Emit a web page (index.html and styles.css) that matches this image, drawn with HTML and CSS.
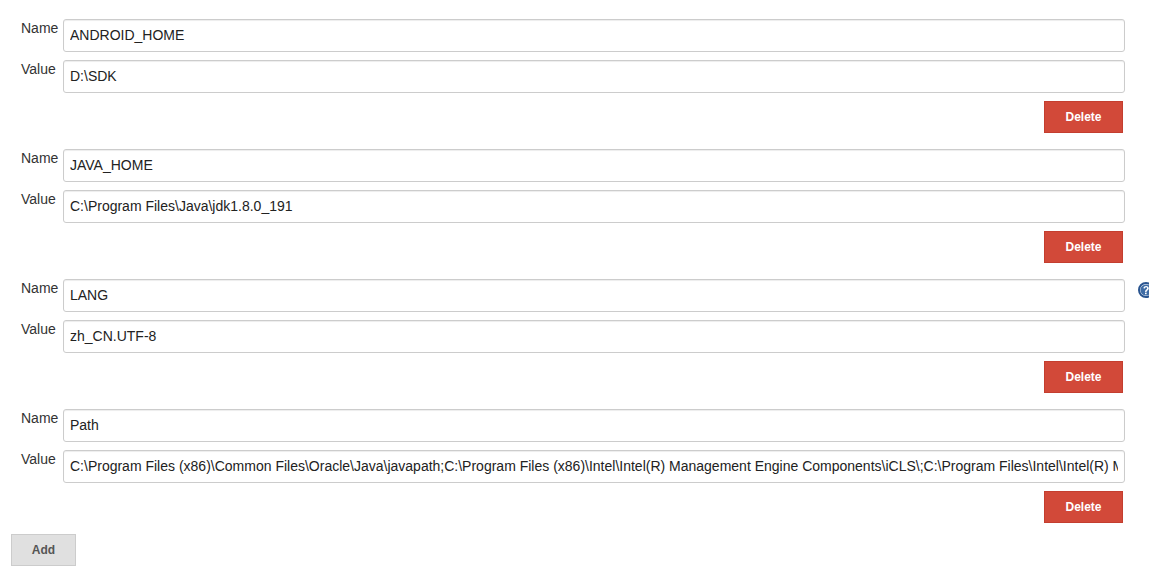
FILE: index.html
```html
<!DOCTYPE html>
<html lang="en">
<head>
<meta charset="utf-8">
<title>Environment variables</title>
<link rel="stylesheet" href="styles.css">
</head>
<body>
<form class="env-list">
  <div class="env-block">
    <div class="row"><label class="label">Name</label><input class="field" type="text" value="ANDROID_HOME"></div>
    <div class="row"><label class="label">Value</label><input class="field" type="text" value="D:\SDK"></div>
    <div class="actions"><button class="btn btn-danger" type="button">Delete</button></div>
  </div>
  <div class="env-block">
    <div class="row"><label class="label">Name</label><input class="field" type="text" value="JAVA_HOME"></div>
    <div class="row"><label class="label">Value</label><input class="field" type="text" value="C:\Program Files\Java\jdk1.8.0_191"></div>
    <div class="actions"><button class="btn btn-danger" type="button">Delete</button></div>
  </div>
  <div class="env-block">
    <div class="row"><label class="label">Name</label><input class="field" type="text" value="LANG">
      <svg class="help" viewBox="0 0 16 16" width="16" height="16" aria-hidden="true">
        <circle cx="8" cy="8" r="7" fill="#fff" stroke="#2a5590" stroke-width="2"/>
        <circle cx="8" cy="8" r="5.600" fill="#3f6ca5"/>
        <path d="M5.400 6.200C5.600 4.600 6.800 3.900 8.100 3.900c1.600 0 2.700 1 2.700 2.300 0 1.200-.7 1.700-1.400 2.200-.6.4-.9.8-.9 1.500H7.100c0-1.200.4-1.800 1.100-2.300.6-.4.9-.8.9-1.300 0-.6-.4-1-1-1-.7 0-1.100.4-1.200 1.100z" fill="#fff"/>
        <rect x="7" y="10.600" width="1.600" height="1.600" fill="#fff"/>
      </svg>
    </div>
    <div class="row"><label class="label">Value</label><input class="field" type="text" value="zh_CN.UTF-8"></div>
    <div class="actions"><button class="btn btn-danger" type="button">Delete</button></div>
  </div>
  <div class="env-block">
    <div class="row"><label class="label">Name</label><input class="field" type="text" value="Path"></div>
    <div class="row"><label class="label">Value</label><input class="field" type="text" value="C:\Program Files (x86)\Common Files\Oracle\Java\javapath;C:\Program Files (x86)\Intel\Intel(R) Management Engine Components\iCLS\;C:\Program Files\Intel\Intel(R) Management Engine Components\iCLS\;C:\Windows\system32"></div>
    <div class="actions"><button class="btn btn-danger" type="button">Delete</button></div>
  </div>
  <div class="footer"><button class="btn btn-default" type="button">Add</button></div>
</form>
</body>
</html>
```
FILE: styles.css
```css
html, body {
  margin: 0;
  padding: 0;
  background: #fff;
  overflow: hidden;
}
body {
  height: 587px;
  font-family: "Liberation Sans", Arial, sans-serif;
  font-size: 14px;
  color: #333;
}
.env-list {
  padding-top: 19px;
}
.env-block {
  height: 130px;
}
.row {
  display: flex;
  align-items: flex-start;
  height: 33px;
  margin-bottom: 8px;
  padding-left: 21px;
}
.label {
  flex: none;
  width: 42px;
  line-height: 18px;
  color: #333;
}
.field {
  flex: none;
  box-sizing: border-box;
  width: 1062px;
  height: 33px;
  margin: 0;
  padding: 0 6px 2px;
  border: 1px solid #ccc;
  border-radius: 3px;
  box-shadow: inset 0 1px 1px rgba(0, 0, 0, 0.075);
  font: 14px "Liberation Sans", Arial, sans-serif;
  color: #222;
  background: #fff;
  outline: none;
}
.help {
  flex: none;
  margin: 3px 0 0 13px;
}
.actions {
  display: flex;
  justify-content: flex-end;
  width: 1123px;
}
.btn {
  box-sizing: border-box;
  height: 32px;
  margin: 0;
  padding: 0;
  font: bold 12px "Liberation Sans", Arial, sans-serif;
  cursor: pointer;
}
.btn-danger {
  width: 79px;
  color: #fff;
  background: #d24939;
  border: 1px solid #c43e2f;
}
.btn-default {
  width: 65px;
  color: #555;
  background: #e0e0e0;
  border: 1px solid #ccc;
}
.footer {
  margin-top: -5px;
  padding-left: 11px;
}
```
